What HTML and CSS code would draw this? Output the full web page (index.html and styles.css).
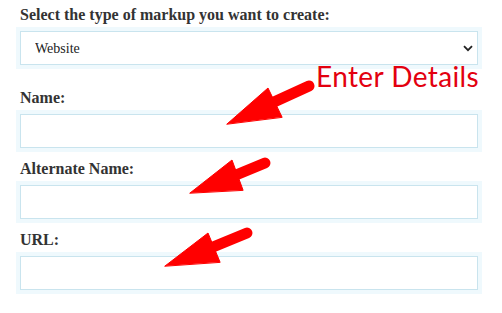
FILE: index.html
```html
<!DOCTYPE html>
<html>
<head>
<meta charset="utf-8">
<link rel="stylesheet" href="styles.css">
</head>
<body>
<div class="page">
  <form class="form">
    <div class="group group-first">
      <label class="label">Select the type of markup you want to create:</label>
      <div class="select-wrap">
        <select class="field select">
          <option>Website</option>
        </select>
        <svg class="chevron" width="10" height="7" viewBox="0 0 10 7"><path d="M1 1.2 L5 5.2 L9 1.2" fill="none" stroke="#222" stroke-width="1.8"/></svg>
      </div>
    </div>
    <div class="group group-name">
      <label class="label">Name:</label>
      <input class="field" type="text">
    </div>
    <div class="group">
      <label class="label">Alternate Name:</label>
      <input class="field" type="text">
    </div>
    <div class="group">
      <label class="label">URL:</label>
      <input class="field" type="text">
    </div>
  </form>
  <div class="note">Enter Details</div>
  <svg class="arrows" width="502" height="313" viewBox="0 0 502 313">
    <g fill="#ff0000" stroke="#ff0000" stroke-linecap="round">
      <line x1="274" y1="102" x2="309" y2="86" stroke-width="11"/>
      <polygon points="227,124 268,88 282,117" stroke-width="1" stroke-linejoin="round"/>
      <line x1="236" y1="175" x2="265" y2="163" stroke-width="11"/>
      <polygon points="190,193 232,160 243,190" stroke-width="1" stroke-linejoin="round"/>
      <line x1="213" y1="247" x2="247" y2="233" stroke-width="11"/>
      <polygon points="165,266 208,233 220,262" stroke-width="1" stroke-linejoin="round"/>
    </g>
  </svg>
</div>
</body>
</html>
```

FILE: styles.css
```css
html, body {
  margin: 0;
  padding: 0;
  background: #ffffff;
}

.page {
  position: relative;
  width: 502px;
  height: 313px;
  overflow: hidden;
}

.form {
  display: flex;
  flex-direction: column;
  padding: 6px 0 0 20px;
  margin: 0;
}

.group {
  display: flex;
  flex-direction: column;
  margin-top: 12px;
}

.group-first {
  margin-top: 0;
}

.group-name {
  margin-top: 24px;
}

.label {
  font-family: "Liberation Serif", "Times New Roman", serif;
  font-weight: bold;
  font-size: 16px;
  line-height: 18px;
  color: #333333;
  margin-bottom: 7px;
}

.select-wrap {
  position: relative;
  width: 458px;
}

.field {
  box-sizing: border-box;
  width: 458px;
  height: 34px;
  margin: 0;
  border: 1px solid #c9e4ee;
  background: #ffffff;
  box-shadow: 0 0 0 4px #eff9fd;
  outline: none;
  font-family: "Liberation Serif", "Times New Roman", serif;
  font-size: 14px;
  color: #222222;
  padding: 0 14px;
  border-radius: 0;
}

.select {
  -webkit-appearance: none;
  appearance: none;
  display: block;
}

.chevron {
  position: absolute;
  left: 443px;
  top: 14px;
}

.note {
  position: absolute;
  left: 316px;
  top: 60px;
  font-family: Lato, "Noto Sans", sans-serif;
  font-size: 28px;
  line-height: 32px;
  letter-spacing: 0.4px;
  color: #e3000f;
  white-space: nowrap;
}

.arrows {
  position: absolute;
  left: 0;
  top: 0;
  pointer-events: none;
}
```
